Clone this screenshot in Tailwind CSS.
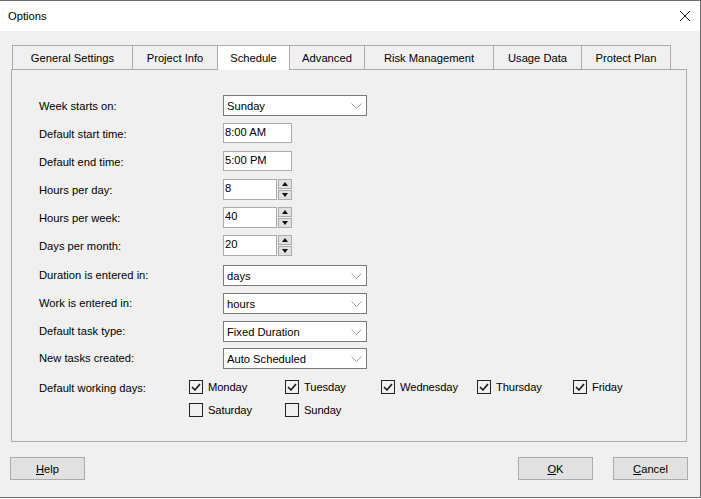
<!DOCTYPE html>
<html lang="en">

<head>
    <meta charset="UTF-8">
    <title>Options</title>
    <script src="https://cdn.jsdelivr.net/npm/@tailwindcss/browser@4"></script>
</head>

<body class="bg-white">
    <div class="w-[701px] h-[498px] bg-[#f0f0f0] border-t border-r border-b border-[#6e6e6e] flex flex-col font-['Liberation_Sans'] text-[11.2px] leading-[16px] text-black overflow-hidden">
        <!-- title bar -->
        <div class="h-[30px] bg-white flex items-center justify-between pl-[8px] pr-[9px] shrink-0">
            <span>Options</span>
            <svg width="12" height="12" viewBox="0 0 12 12" fill="none" stroke="#111" stroke-width="1"><path d="M1 1l10 10M11 1L1 11" /></svg>
        </div>

        <!-- tabs -->
        <div class="flex items-end h-[38px] pl-[12px] shrink-0 relative z-10">
            <div class="w-[121px] h-[24px] flex items-center justify-center border-t border-l border-r border-[#acacac] -mr-px">General Settings</div>
            <div class="w-[86px] h-[24px] flex items-center justify-center border-t border-l border-r border-[#acacac] -mr-px">Project Info</div>
            <div class="w-[73px] h-[25px] flex items-center justify-center border-t border-l border-r border-[#acacac] bg-white -mr-px -mb-px relative z-10">Schedule</div>
            <div class="w-[76px] h-[24px] flex items-center justify-center border-t border-l border-r border-[#acacac] -mr-px">Advanced</div>
            <div class="w-[130px] h-[24px] flex items-center justify-center border-t border-l border-r border-[#acacac] -mr-px">Risk Management</div>
            <div class="w-[89px] h-[24px] flex items-center justify-center border-t border-l border-r border-[#acacac] -mr-px">Usage Data</div>
            <div class="w-[90px] h-[24px] flex items-center justify-center border-t border-l border-r border-[#acacac]">Protect Plan</div>
        </div>

        <!-- panel -->
        <div class="ml-[11px] w-[676px] h-[373px] border border-[#acacac] pl-[27px] pt-[25px] shrink-0">
            <div class="grid grid-cols-[184px_1fr] grid-rows-[28px_28px_28px_28px_28px_30px_28px_28px_27px_32px] items-start">
                <label class="pt-[3px]">Week starts on:</label>
                <div class="w-[144px] h-[21px] bg-white border border-[#7a7a7a] flex items-center justify-between pl-[3px] pr-[4px]"><span>Sunday</span><svg width="11" height="6" viewBox="0 0 11 6" fill="none" stroke="#a0a0a0"><path d="M0.5 0.5l5 5 5-5" /></svg></div>

                <label class="pt-[3px]">Default start time:</label>
                <div class="w-[69px] h-[20px] bg-white border border-[#acacac] flex items-center pl-[1px] pb-[3px]">8:00 AM</div>

                <label class="pt-[3px]">Default end time:</label>
                <div class="w-[69px] h-[20px] bg-white border border-[#acacac] flex items-center pl-[1px] pb-[3px]">5:00 PM</div>

                <label class="pt-[3px]">Hours per day:</label>
                <div class="flex gap-[1px]">
                    <div class="w-[54px] h-[21px] bg-white border border-[#acacac] flex items-center pl-[1px] pb-[3px]">8</div>
                    <div class="flex flex-col gap-[1px]">
                        <div class="w-[14px] h-[10px] bg-[#e1e1e1] border border-[#acacac] flex items-center justify-center"><svg width="6" height="4" viewBox="0 0 6 4" fill="#111"><path d="M3 0L6 4H0z" /></svg></div>
                        <div class="w-[14px] h-[10px] bg-[#e1e1e1] border border-[#acacac] flex items-center justify-center"><svg width="6" height="4" viewBox="0 0 6 4" fill="#111"><path d="M0 0H6L3 4z" /></svg></div>
                    </div>
                </div>

                <label class="pt-[3px]">Hours per week:</label>
                <div class="flex gap-[1px]">
                    <div class="w-[54px] h-[21px] bg-white border border-[#acacac] flex items-center pl-[1px] pb-[3px]">40</div>
                    <div class="flex flex-col gap-[1px]">
                        <div class="w-[14px] h-[10px] bg-[#e1e1e1] border border-[#acacac] flex items-center justify-center"><svg width="6" height="4" viewBox="0 0 6 4" fill="#111"><path d="M3 0L6 4H0z" /></svg></div>
                        <div class="w-[14px] h-[10px] bg-[#e1e1e1] border border-[#acacac] flex items-center justify-center"><svg width="6" height="4" viewBox="0 0 6 4" fill="#111"><path d="M0 0H6L3 4z" /></svg></div>
                    </div>
                </div>

                <label class="pt-[3px]">Days per month:</label>
                <div class="flex gap-[1px]">
                    <div class="w-[54px] h-[21px] bg-white border border-[#acacac] flex items-center pl-[1px] pb-[3px]">20</div>
                    <div class="flex flex-col gap-[1px]">
                        <div class="w-[14px] h-[10px] bg-[#e1e1e1] border border-[#acacac] flex items-center justify-center"><svg width="6" height="4" viewBox="0 0 6 4" fill="#111"><path d="M3 0L6 4H0z" /></svg></div>
                        <div class="w-[14px] h-[10px] bg-[#e1e1e1] border border-[#acacac] flex items-center justify-center"><svg width="6" height="4" viewBox="0 0 6 4" fill="#111"><path d="M0 0H6L3 4z" /></svg></div>
                    </div>
                </div>

                <label class="pt-[2px]">Duration is entered in:</label>
                <div class="w-[144px] h-[21px] bg-white border border-[#7a7a7a] flex items-center justify-between pl-[3px] pr-[4px]"><span>days</span><svg width="11" height="6" viewBox="0 0 11 6" fill="none" stroke="#a0a0a0"><path d="M0.5 0.5l5 5 5-5" /></svg></div>

                <label class="pt-[2px]">Work is entered in:</label>
                <div class="w-[144px] h-[21px] bg-white border border-[#7a7a7a] flex items-center justify-between pl-[3px] pr-[4px]"><span>hours</span><svg width="11" height="6" viewBox="0 0 11 6" fill="none" stroke="#a0a0a0"><path d="M0.5 0.5l5 5 5-5" /></svg></div>

                <label class="pt-[2px]">Default task type:</label>
                <div class="w-[144px] h-[21px] bg-white border border-[#7a7a7a] flex items-center justify-between pl-[3px] pr-[4px]"><span>Fixed Duration</span><svg width="11" height="6" viewBox="0 0 11 6" fill="none" stroke="#a0a0a0"><path d="M0.5 0.5l5 5 5-5" /></svg></div>

                <label class="pt-[2px]">New tasks created:</label>
                <div class="w-[144px] h-[21px] bg-white border border-[#7a7a7a] flex items-center justify-between pl-[3px] pr-[4px]"><span>Auto Scheduled</span><svg width="11" height="6" viewBox="0 0 11 6" fill="none" stroke="#a0a0a0"><path d="M0.5 0.5l5 5 5-5" /></svg></div>
            </div>

            <!-- working days -->
            <div class="flex">
                <label class="w-[150px]">Default working days:</label>
                <div class="grid grid-cols-[repeat(5,96px)] auto-rows-[23px]">
                    <div class="flex items-start gap-[5px]"><span class="w-[14px] h-[14px] border border-[#222] flex items-center justify-center"><svg width="10" height="8" viewBox="0 0 10 8" fill="none" stroke="#111" stroke-width="1.5"><path d="M1 4l3 3 5-6" /></svg></span><span class="-mt-px tracking-[-0.1px]">Monday</span></div>
                    <div class="flex items-start gap-[5px]"><span class="w-[14px] h-[14px] border border-[#222] flex items-center justify-center"><svg width="10" height="8" viewBox="0 0 10 8" fill="none" stroke="#111" stroke-width="1.5"><path d="M1 4l3 3 5-6" /></svg></span><span class="-mt-px tracking-[-0.1px]">Tuesday</span></div>
                    <div class="flex items-start gap-[5px]"><span class="w-[14px] h-[14px] border border-[#222] flex items-center justify-center"><svg width="10" height="8" viewBox="0 0 10 8" fill="none" stroke="#111" stroke-width="1.5"><path d="M1 4l3 3 5-6" /></svg></span><span class="-mt-px tracking-[-0.1px]">Wednesday</span></div>
                    <div class="flex items-start gap-[5px]"><span class="w-[14px] h-[14px] border border-[#222] flex items-center justify-center"><svg width="10" height="8" viewBox="0 0 10 8" fill="none" stroke="#111" stroke-width="1.5"><path d="M1 4l3 3 5-6" /></svg></span><span class="-mt-px tracking-[-0.1px]">Thursday</span></div>
                    <div class="flex items-start gap-[5px]"><span class="w-[14px] h-[14px] border border-[#222] flex items-center justify-center"><svg width="10" height="8" viewBox="0 0 10 8" fill="none" stroke="#111" stroke-width="1.5"><path d="M1 4l3 3 5-6" /></svg></span><span class="-mt-px tracking-[-0.1px]">Friday</span></div>
                    <div class="flex items-start gap-[5px]"><span class="w-[14px] h-[14px] border border-[#222]"></span><span class="-mt-px tracking-[-0.1px]">Saturday</span></div>
                    <div class="flex items-start gap-[5px]"><span class="w-[14px] h-[14px] border border-[#222]"></span><span class="-mt-px tracking-[-0.1px]">Sunday</span></div>
                </div>
            </div>
        </div>

        <!-- buttons -->
        <div class="flex justify-between pl-[10px] pr-[12px] pt-[15px] shrink-0">
            <button class="w-[75px] h-[23px] bg-[#e1e1e1] border border-[#acacac]"><u>H</u>elp</button>
            <div class="flex gap-[20px]">
                <button class="w-[75px] h-[23px] bg-[#e1e1e1] border border-[#acacac]"><u>O</u>K</button>
                <button class="w-[75px] h-[23px] bg-[#e1e1e1] border border-[#acacac]"><u>C</u>ancel</button>
            </div>
        </div>
    </div>
</body>

</html>
